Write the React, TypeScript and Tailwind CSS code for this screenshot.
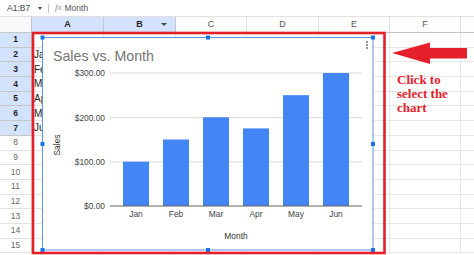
const cols = ["A", "B", "C", "D", "E", "F", ""];
const months = ["Jan", "Feb", "Mar", "Apr", "May", "Jun"];
const sales = [100, 150, 200, 175, 250, 300];
const rows = Array.from({ length: 15 }, (_, i) => i + 1);

function SheetGrid() {
  return (
    <div className="flex flex-col w-[560px]">
      {/* column headers */}
      <div className="grid grid-cols-[32px_72px_72px_71px_72px_71px_71px_72px] h-[16px] border-b border-[#c4c7c5]">
        <div className="bg-[#f8f9fa] border-r border-[#c4c7c5]" />
        {cols.map((c, i) => {
          const sel = c === "A" || c === "B";
          return (
            <div
              key={i}
              className={
                sel
                  ? "relative flex items-center justify-center bg-[#d3e3fd] border-r border-[#c4c7c5] text-[9px] font-bold text-[#1f1f1f]"
                  : "flex items-center justify-center bg-[#fdfdfd] border-r border-[#e1e1e1] text-[9px] text-[#575757]"
              }
            >
              {c}
              {c === "B" && (
                <span className="absolute right-[8px] top-[6px] w-0 h-0 border-l-[3px] border-r-[3px] border-t-[3px] border-l-transparent border-r-transparent border-t-[#444]" />
              )}
            </div>
          );
        })}
      </div>
      {rows.map((r) => {
        const sel = r <= 7;
        return (
          <div
            key={r}
            className="grid grid-cols-[32px_72px_72px_71px_72px_71px_71px_72px] h-[14.7px]"
          >
            <div
              className={
                sel
                  ? "flex items-center justify-center bg-[#d3e3fd] border-r border-b border-[#c4c7c5] text-[8.5px] font-bold text-[#1f1f1f]"
                  : "flex items-center justify-center bg-white border-r border-b border-[#e1e1e1] text-[8.5px] text-[#666]"
              }
            >
              {r}
            </div>
            {cols.map((c, i) => (
              <div
                key={i}
                className="flex items-center pl-[2px] border-r border-b border-[#e6e6e6] text-[10px] text-[#222] overflow-hidden whitespace-nowrap"
              >
                {c === "A" && r >= 2 && r <= 7 ? months[r - 2] : ""}
              </div>
            ))}
          </div>
        );
      })}
    </div>
  );
}

function Chart() {
  const base = 206;
  const k = (206 - 73) / 300;
  const grid = [
    { v: "$300.00", y: 73 },
    { v: "$200.00", y: 117.7 },
    { v: "$100.00", y: 162 },
  ];
  const handles: [number, number][] = [
    [42.5, 37.5],
    [208, 37.5],
    [373, 37.5],
    [42.5, 144],
    [373, 144],
    [42.5, 250],
    [208, 250],
    [373, 250],
  ];
  return (
    <div className="absolute left-0 top-0 w-[474px] h-[255px] pointer-events-none">
      <svg width="474" height="255" viewBox="0 0 474 255" className="block">
        <rect x="42.5" y="37.5" width="330.5" height="212.5" fill="#fff" stroke="#5c92ef" strokeWidth="1" />
        <text x="53" y="61" fontFamily="'Liberation Sans', Arial, sans-serif" fontSize="14.2" fill="#757575">
          Sales vs. Month
        </text>
        <g fill="#5f6368">
          <circle cx="367" cy="42" r="0.9" />
          <circle cx="367" cy="45" r="0.9" />
          <circle cx="367" cy="48" r="0.9" />
        </g>
        {grid.map((g) => (
          <g key={g.v}>
            <line x1="110" x2="362" y1={g.y} y2={g.y} stroke="#d9d9d9" strokeWidth="1" />
            <text
              x="105"
              y={g.y + 3}
              textAnchor="end"
              fontFamily="'Liberation Sans', Arial, sans-serif"
              fontSize="8.4"
              fill="#444"
            >
              {g.v}
            </text>
          </g>
        ))}
        <text x="105" y={base + 3} textAnchor="end" fontFamily="'Liberation Sans', Arial, sans-serif" fontSize="8.4" fill="#444">
          $0.00
        </text>
        {sales.map((s, i) => {
          const x = 123 + i * 40;
          const h = s * k;
          return (
            <g key={i}>
              <rect x={x} y={base - h} width="26" height={h} fill="#4285f4" />
              <text
                x={x + 13}
                y="217"
                textAnchor="middle"
                fontFamily="'Liberation Sans', Arial, sans-serif"
                fontSize="8.4"
                fill="#444"
              >
                {months[i]}
              </text>
            </g>
          );
        })}
        <line x1="110" x2="362" y1={base} y2={base} stroke="#666" strokeWidth="1" />
        <text x="236" y="239" textAnchor="middle" fontFamily="'Liberation Sans', Arial, sans-serif" fontSize="8.4" fill="#333">
          Month
        </text>
        <text
          x="0"
          y="0"
          transform="translate(60 145) rotate(-90)"
          textAnchor="middle"
          fontFamily="'Liberation Sans', Arial, sans-serif"
          fontSize="8.4"
          fill="#333"
        >
          Sales
        </text>
        {handles.map(([x, y], i) => (
          <rect key={i} x={x - 2} y={y - 2} width="4" height="4" fill="#1a73e8" />
        ))}
        {/* red selection frame */}
        <rect x="33" y="33" width="351.5" height="220" fill="none" stroke="#e5202a" strokeWidth="2.6" />
        {/* arrow */}
        <polygon points="392,53 430,42.5 430,48 467,48 467,58.5 430,58.5 430,64" fill="#e5202a" />
      </svg>
    </div>
  );
}

export default function App() {
  return (
    <div className="relative w-[474px] h-[255px] overflow-hidden bg-white font-['Liberation_Sans',Arial,sans-serif]">
      <div className="flex items-center h-[17px] border-b border-[#e1e1e1] text-[8.5px] text-[#444]">
        <span className="ml-[7px] w-[31px]">A1:B7</span>
        <span className="w-0 h-0 border-l-[2.5px] border-r-[2.5px] border-t-[3px] border-l-transparent border-r-transparent border-t-[#444]" />
        <span className="ml-[6px] h-[9px] w-px bg-[#c4c7c5]" />
        <span className="ml-[6px] italic text-[#888] font-['Liberation_Serif',serif] text-[9px]">fx</span>
        <span className="ml-[3px] text-[#555]">Month</span>
      </div>
      <SheetGrid />
      <Chart />
      <div className="absolute left-[397px] top-[73px] font-['Liberation_Serif',serif] font-bold text-[13px] leading-[14px] text-[#e5202a]">
        <div>Click to</div>
        <div>select the</div>
        <div>chart</div>
      </div>
    </div>
  );
}
